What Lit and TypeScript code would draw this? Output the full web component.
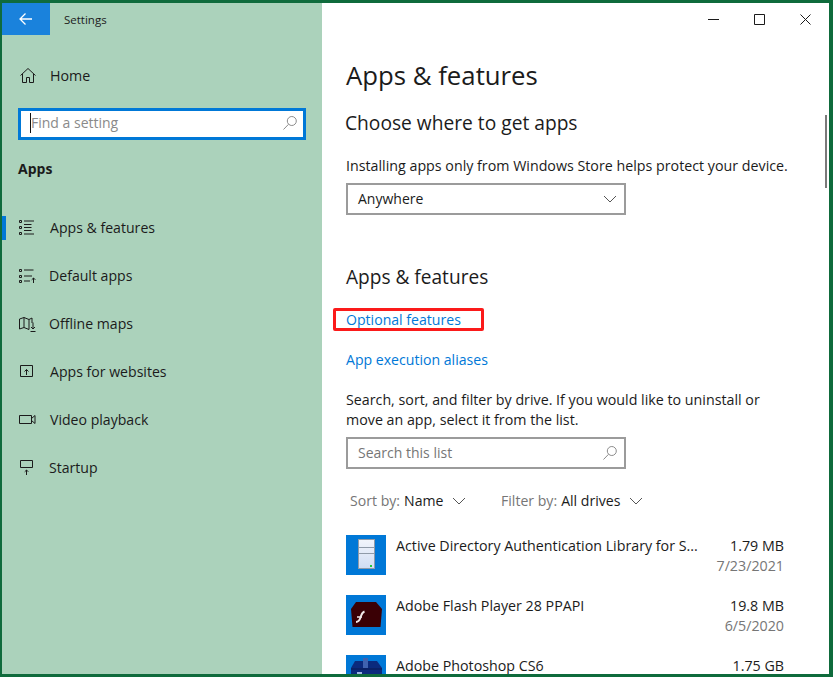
import { LitElement, html, css, svg } from "lit";
import { customElement } from "lit/decorators.js";

const stroke = (c: unknown) => html`<svg class="ic" width="20" height="20" viewBox="0 0 20 20" fill="none" stroke="#1b1b1b" stroke-width="1">${c}</svg>`;

const icons = {
  home: stroke(svg`<path d="M2.500 10.500 10 3.500l7.500 7M4.500 9v8.500h4v-5h3v5h4V9"/>`),
  list: stroke(svg`<path d="M2.500 2.500h2v2h-2zM2.500 8.500h2v2h-2zM2.500 14.500h2v2h-2zM7 3h10M7 6.500h7.500M7 9.500h7.500M7 12.500h7.500M7 16h10"/>`),
  defaults: stroke(svg`<path d="M2.500 3.500h2v2h-2zM2.500 9.500h2v2h-2zM2.500 14.500h2v2h-2zM7 4h9.500M7 10h8M7 15h6M16.500 17v-5M14.700 13.800l1.800-1.800 1.800 1.800"/>`),
  maps: stroke(svg`<path d="M2.500 5 7 3.500l5 2 3-1.500v5M2.500 5v10l4.500-1.500 5 2V5.500M7 3.500v10M16 8.500v6.500M14 13l2 2 2-2M13.500 17.500h5"/>`),
  web: stroke(svg`<path d="M3.500 3.500h12v11h-12zM9.500 13V7.500M7.500 9.500l2-2 2 2"/>`),
  video: stroke(svg`<path d="M2.500 5.500h12v8h-12zM14.500 8.500l3.500-3v8l-3.500-3"/>`),
  startup: stroke(svg`<path d="M3.500 2.500h12v7h-12zM9.500 17v-5M7.700 13.800l1.800-1.800 1.800 1.800"/>`),
  search: html`<svg class="ic" width="16" height="16" viewBox="0 0 16 16" fill="none" stroke="#8c8c8c" stroke-width="1"><circle cx="9.800" cy="6" r="4.500"/><path d="M6.500 9.300 1.500 14.500"/></svg>`,
  chevron: html`<svg class="ic" width="14" height="8" viewBox="0 0 14 8" fill="none" stroke="#555" stroke-width="1"><path d="M1 1l6 6 6-6"/></svg>`,
  server: html`<svg width="40" height="40" viewBox="0 0 40 40"><defs><linearGradient id="g" x1="0" y1="0" x2="0" y2="1"><stop offset="0" stop-color="#f2f5fb"/><stop offset="1" stop-color="#cfdcf3"/></linearGradient></defs><rect width="40" height="40" fill="#0078d7"/><rect x="12.500" y="4.500" width="16" height="29" fill="url(#g)" stroke="#8f9aa8"/><path d="M13 12.500h15M13 18.500h15" stroke="#8f9aa8"/><rect x="24" y="30" width="2" height="2" fill="#1fc83a"/></svg>`,
  flash: html`<svg width="40" height="40" viewBox="0 0 40 40"><rect width="40" height="40" fill="#0078d7"/><path d="M10 7h20l6 7-1.500 18H6.500L5 14z" fill="#3a0005"/><path d="M10 27c3.500 0 4-3 5-6s2-4 3.500-4.500" fill="none" stroke="#f2e8e8" stroke-width="2"/><path d="M11 22h5" stroke="#f2e8e8" stroke-width="1.500"/></svg>`,
  ps: html`<svg width="40" height="40" viewBox="0 0 40 40"><rect width="40" height="40" fill="#0078d7"/><path d="M9 6h22l5 7v20H5V13z" fill="#0b2a7d"/><rect x="17" y="3" width="5" height="10" fill="#3f62b0"/><rect x="5" y="13" width="31" height="2" fill="#0a2166"/><rect x="11" y="17" width="5" height="4" fill="#9db4e4"/></svg>`,
};

const nav = [
  ["list", "Apps & features", false], ["defaults", "Default apps", true], ["maps", "Offline maps", true],
  ["web", "Apps for websites", false], ["video", "Video playback", false], ["startup", "Startup", true],
] as const;

const apps = [
  ["server", "Active Directory Authentication Library for S...", "1.79 MB", "7/23/2021"],
  ["flash", "Adobe Flash Player 28 PPAPI", "19.8 MB", "6/5/2020"],
  ["ps", "Adobe Photoshop CS6", "1.75 GB", ""],
] as const;

@customElement("app-root")
export class AppRoot extends LitElement {
  static styles = css`
    :host { display: block; width: 833px; height: 677px; overflow: hidden; box-sizing: border-box;
      border: solid #0f6b3c; border-width: 3px 4px 3px 2px;
      font-family: "Open Sans", "Noto Sans", sans-serif; font-size: 14.250px; color: #1b1b1b; }
    * { box-sizing: border-box; }
    svg { display: block; flex: none; }
    .window { display: flex; height: 671px; background: #fff; position: relative; overflow: hidden; }
    .side { width: 320px; flex: none; background: #abd2bb; display: flex; flex-direction: column; }
    .head { display: flex; align-items: center; height: 32px; font-size: 11.500px; }
    .back { width: 48px; height: 32px; background: #1a82dc; display: flex; align-items: center; justify-content: center; margin-right: 14px; }
    .home { display: flex; align-items: center; height: 48px; margin-top: 17px; padding: 0 0 2px 16px; gap: 12px; }
    .find { margin: 8px 0 0 16px; width: 288px; height: 32px; border: 3px solid #0078d7; background: #fff; display: flex; align-items: center; justify-content: space-between; padding: 0 5px 2px 9px; color: #8a8a8a; font-size: 14px; }
    .find span { border-left: 1px solid #111; line-height: 20px; }
    .cat { margin: 17px 0 0 16px; font-weight: 700; height: 24px; line-height: 24px; font-size: 14px; }
    .navlist { margin-top: 23px; }
    .row { display: flex; align-items: center; height: 48px; padding: 0 0 2px 15px; gap: 13px; position: relative; font-size: 14.100px; }
    .row.tight { gap: 12px; }
    .row svg { margin-top: 2px; }
    .row.on::before { content: ""; position: absolute; left: 0; top: 12px; width: 4px; height: 24px; background: #0078d7; }
    .main { flex: 1; padding-left: 24px; position: relative; }
    .controls { display: flex; height: 32px; justify-content: flex-end; align-items: center; gap: 35px; padding-right: 18px; }
    h1 { font-weight: 400; font-size: 25.750px; line-height: 36px; margin: 22px 0 0; }
    h2 { font-weight: 400; font-size: 19.100px; line-height: 28px; margin: 0; }
    .h2a { margin: 16px 0 0 -1px; font-size: 19.200px; }
    .p { margin: 0; line-height: 20px; }
    .install { margin-top: 19px; }
    .box { width: 280px; height: 32px; border: 2px solid #9b9b9b; display: flex; align-items: center; justify-content: space-between; padding: 0 7px 2px 10px; font-size: 14px; }
    .box svg { margin-top: 2px; }
    .drop { margin-top: 7px; }
    .h2b { margin-top: 48px; }
    a { display: block; color: #0078d7; line-height: 20px; font-size: 14.100px; }
    .l1 { margin-top: 19px; }
    .l2 { margin-top: 20px; }
    .para { margin-top: 20px; }
    .s2 { margin-top: 7px; color: #767676; padding-right: 6px; }
    .filters { display: flex; height: 20px; margin: 21px 0 0 4px; align-items: center; color: #767676; font-size: 14.100px; }
    .filters b { font-weight: 400; color: #1b1b1b; margin-left: 4px; }
    .filters svg { margin: 2px 0 0 9px; }
    .f1 { display: flex; align-items: center; width: 151px; }
    .f2 { display: flex; align-items: center; }
    .apps { margin-top: 25px; display: flex; flex-direction: column; gap: 20px; width: 438px; }
    .app { display: flex; gap: 10px; height: 40px; }
    .nm { flex: 1; line-height: 20px; margin-top: 1px; white-space: nowrap; }
    .sz { text-align: right; line-height: 20px; margin-top: 1px; }
    .sz div + div { color: #767676; }
    .thumb { position: absolute; right: 2px; top: 112px; width: 2px; height: 73px; background: #7a7a7a; }
    .mark { position: absolute; left: 331px; top: 305px; width: 151px; height: 23px; border: 3px solid #fb1a1a; border-radius: 2px; }
  `;

  render() {
    return html`<div class="window">
      <aside class="side">
        <div class="head">
          <div class="back"><svg width="16" height="14" viewBox="0 0 16 14" fill="none" stroke="#fff" stroke-width="1.300"><path d="M14 7H2M7.500 1.500 2 7l5.500 5.500"/></svg></div>
          <span>Settings</span>
        </div>
        <div class="home">${icons.home}<span>Home</span></div>
        <div class="find"><span>Find a setting</span>${icons.search}</div>
        <div class="cat">Apps</div>
        <nav class="navlist">
          ${nav.map(([ic, label, tight], i) => html`<div class="row ${i === 0 ? "on" : ""} ${tight ? "tight" : ""}">${icons[ic]}<span>${label}</span></div>`)}
        </nav>
      </aside>
      <main class="main">
        <div class="controls">
          <svg width="11" height="11" viewBox="0 0 11 11" stroke="#1b1b1b"><path d="M0 5.500h11"/></svg>
          <svg width="11" height="11" viewBox="0 0 11 11" fill="none" stroke="#1b1b1b"><path d="M.5.500h10v10H.5z"/></svg>
          <svg width="11" height="11" viewBox="0 0 11 11" stroke="#1b1b1b"><path d="M.5.500l10 10M10.500.500l-10 10"/></svg>
        </div>
        <h1>Apps &amp; features</h1>
        <h2 class="h2a">Choose where to get apps</h2>
        <p class="p install">Installing apps only from Windows Store helps protect your device.</p>
        <div class="box drop"><span>Anywhere</span>${icons.chevron}</div>
        <h2 class="h2b">Apps &amp; features</h2>
        <a class="l1">Optional features</a>
        <a class="l2">App execution aliases</a>
        <p class="p para">Search, sort, and filter by drive. If you would like to uninstall or<br />move an app, select it from the list.</p>
        <div class="box s2"><span>Search this list</span>${icons.search}</div>
        <div class="filters">
          <div class="f1">Sort by:<b>Name</b>${icons.chevron}</div>
          <div class="f2">Filter by:<b>All drives</b>${icons.chevron}</div>
        </div>
        <div class="apps">
          ${apps.map(([ic, n, s, d]) => html`<div class="app">${icons[ic]}<div class="nm">${n}</div><div class="sz"><div>${s}</div><div>${d}</div></div></div>`)}
        </div>
      </main>
      <div class="thumb"></div>
      <div class="mark"></div>
    </div>`;
  }
}
